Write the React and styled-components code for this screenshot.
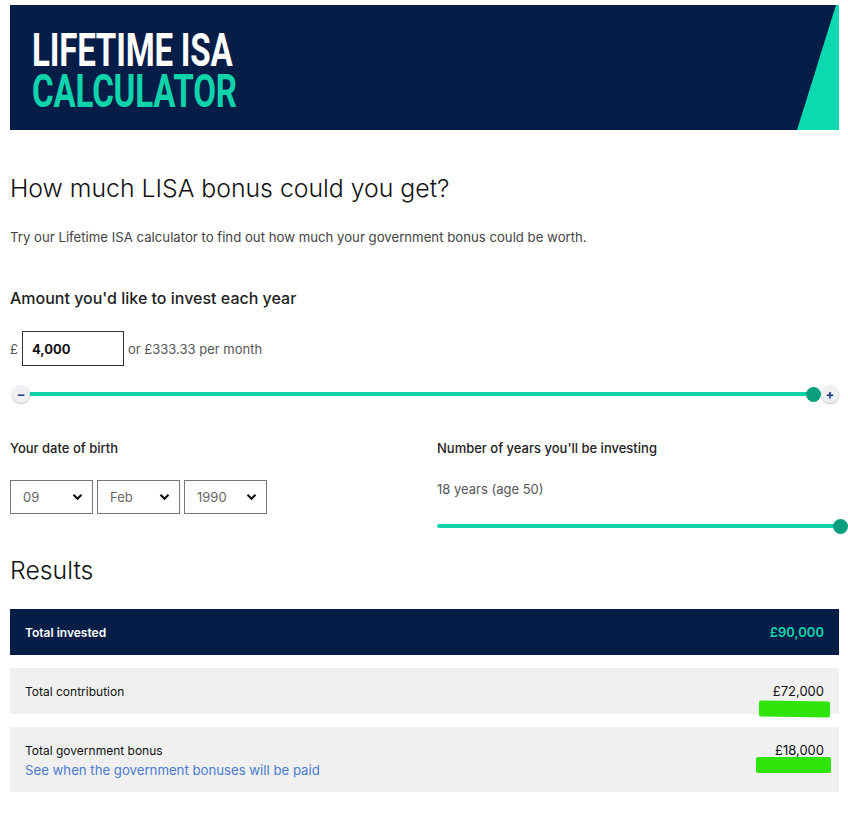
import React from "react";
import styled, { createGlobalStyle } from "styled-components";

const Global = createGlobalStyle`
  html, body { margin: 0; padding: 0; background: #fff; }
  body { font-family: Inter, "Noto Sans", sans-serif; color: #1a1a1a; }
  * { box-sizing: border-box; }
`;

const NAVY = "#061d48";
const TEAL = "#0fd4ab";

const Page = styled.div`
  padding: 5px 9px 20px 10px;
  width: 848px;
`;

const Banner = styled.header`
  position: relative;
  height: 125px;
  background: ${NAVY};
  overflow: hidden;
  padding: 25px 0 0 22px;
`;

const Wedge = styled.svg`
  position: absolute;
  right: 0;
  top: 0;
  width: 44px;
  height: 125px;
`;

const Title = styled.div`
  font-family: Roboto, "Liberation Sans", sans-serif;
  font-weight: 700;
  font-size: 46px;
  line-height: 41px;
  transform: scaleX(0.72);
  transform-origin: left center;
  white-space: nowrap;
  letter-spacing: -0.3px;
`;

const TitleLine = styled.span`
  display: block;
  color: ${(p) => p.$color};
`;

const H1 = styled.h1`
  margin: 43px 0 0 0;
  font-weight: 300;
  font-size: 24.8px;
  line-height: 30px;
  color: #111;
`;

const Lead = styled.p`
  margin: 25px 0 0 0;
  font-size: 13.2px;
  line-height: 18px;
  color: #444;
`;

const Label = styled.div`
  font-size: ${(p) => p.$size || 13}px;
  font-weight: 500;
  color: #222;
  line-height: 20px;
`;

const Section = styled.section`
  margin-top: ${(p) => p.$mt}px;
`;

const AmountRow = styled.div`
  display: flex;
  align-items: center;
  margin-top: 23px;
  font-size: 13px;
  color: #555;
`;

const Pound = styled.span`
  width: 12px;
`;

const AmountInput = styled.div`
  width: 102px;
  height: 35px;
  border: 1px solid #333;
  display: flex;
  align-items: center;
  padding-left: 9px;
  font-weight: 700;
  color: #111;
  font-size: 13px;
  margin-right: 4px;
`;

const SliderWrap = styled.div`
  position: relative;
  height: 20px;
  margin-top: ${(p) => p.$mt}px;
  margin-left: ${(p) => p.$ml || 0}px;
  margin-right: ${(p) => p.$mr || 0}px;
`;

const Track = styled.div`
  position: absolute;
  left: ${(p) => p.$left}px;
  right: ${(p) => p.$right}px;
  top: 8px;
  height: 4px;
  background: ${TEAL};
  border-radius: 2px;
`;

const Thumb = styled.div`
  position: absolute;
  width: 15px;
  height: 15px;
  border-radius: 50%;
  background: #0c9f7e;
  top: 3px;
  right: ${(p) => p.$right}px;
`;

const StepBtn = styled.div`
  position: absolute;
  top: 1px;
  ${(p) => (p.$side === "left" ? "left: 2px;" : "right: 0;")}
  width: 18px;
  height: 18px;
  border-radius: 50%;
  background: #eef0f3;
  box-shadow: 0 1px 2px rgba(0, 0, 0, 0.25);
  display: flex;
  align-items: center;
  justify-content: center;
  color: #1f3a8a;
  font-size: 13px;
  font-weight: 700;
  line-height: 1;
`;

const TwoCol = styled.div`
  display: grid;
  grid-template-columns: 427px 1fr;
  margin-top: 34px;
`;

const SelectRow = styled.div`
  display: flex;
  gap: 4px;
  margin-top: 22px;
`;

const Select = styled.div`
  width: 83px;
  height: 34px;
  border: 1px solid #777;
  display: flex;
  align-items: center;
  justify-content: space-between;
  padding: 0 9px 0 12px;
  color: #666;
  font-size: 13px;
`;

const YearsText = styled.div`
  margin-top: 21px;
  font-size: 13px;
  color: #555;
  line-height: 20px;
`;

const H2 = styled.h2`
  margin: 19px 0 0 0;
  font-weight: 300;
  font-size: 24.8px;
  line-height: 30px;
  color: #111;
`;

const Rows = styled.div`
  display: flex;
  flex-direction: column;
  gap: 13px;
  margin-top: 24px;
`;

const Row = styled.div`
  position: relative;
  display: flex;
  justify-content: space-between;
  align-items: ${(p) => (p.$tall ? "flex-start" : "center")};
  min-height: ${(p) => (p.$tall ? 65 : 46)}px;
  padding: ${(p) => (p.$tall ? "16px 15px 0 15px" : "0 15px")};
  background: ${(p) => (p.$dark ? NAVY : "#f0f0f0")};
  color: ${(p) => (p.$dark ? "#fff" : "#111")};
  font-size: 12px;
`;

const RowLabel = styled.div`
  font-weight: ${(p) => (p.$bold ? 600 : 400)};
  line-height: 15px;
  display: flex;
  flex-direction: column;
  gap: 5px;
`;

const Link = styled.a`
  color: #4a7bd0;
  font-size: 13.2px;
  text-decoration: none;
`;

const Value = styled.div`
  font-size: 13px;
  font-weight: ${(p) => (p.$bold ? 600 : 400)};
  color: ${(p) => (p.$dark ? TEAL : "#111")};
  line-height: 15px;
`;

const Marker = styled.div`
  position: absolute;
  background: #2ee40a;
  border-radius: 2px;
  right: ${(p) => p.$right}px;
  top: ${(p) => p.$top}px;
  width: ${(p) => p.$w}px;
  height: ${(p) => p.$h}px;
  transform: skewY(${(p) => p.$skew || 0}deg);
`;

const Chevron = () => (
  <svg width="11" height="8" viewBox="0 0 11 8">
    <path d="M1.5 1.8 L5.5 5.8 L9.5 1.8" stroke="#111" strokeWidth="2.2" fill="none" />
  </svg>
);

export default function App() {
  return (
    <Page>
      <Global />
      <Banner>
        <Title>
          <TitleLine $color="#ffffff">LIFETIME ISA</TitleLine>
          <TitleLine $color={TEAL}>CALCULATOR</TitleLine>
        </Title>
        <Wedge viewBox="0 0 44 125" preserveAspectRatio="none">
          <polygon points="41,0 44,0 44,125 2,125" fill="#0bd9b0" />
        </Wedge>
      </Banner>

      <H1>How much LISA bonus could you get?</H1>
      <Lead>Try our Lifetime ISA calculator to find out how much your government bonus could be worth.</Lead>

      <Section $mt={42}>
        <Label $size={16}>Amount you'd like to invest each year</Label>
        <AmountRow>
          <Pound>£</Pound>
          <AmountInput>4,000</AmountInput>
          <span>or £333.33 per month</span>
        </AmountRow>
        <SliderWrap $mt={18}>
          <Track $left={18} $right={24} />
          <Thumb $right={18} />
          <StepBtn $side="left">–</StepBtn>
          <StepBtn $side="right">+</StepBtn>
        </SliderWrap>
      </Section>

      <TwoCol>
        <div>
          <Label>Your date of birth</Label>
          <SelectRow>
            <Select>09<Chevron /></Select>
            <Select>Feb<Chevron /></Select>
            <Select>1990<Chevron /></Select>
          </SelectRow>
        </div>
        <div>
          <Label>Number of years you'll be investing</Label>
          <YearsText>18 years (age 50)</YearsText>
          <SliderWrap $mt={17} $mr={-9}>
            <Track $left={0} $right={3} />
            <Thumb $right={0} />
          </SliderWrap>
        </div>
      </TwoCol>

      <H2>Results</H2>
      <Rows>
        <Row $dark>
          <RowLabel $bold>Total invested</RowLabel>
          <Value $dark $bold>£90,000</Value>
        </Row>
        <Row>
          <RowLabel>Total contribution</RowLabel>
          <Value>£72,000</Value>
          <Marker $right={9} $top={33} $w={71} $h={16} $skew={1} />
        </Row>
        <Row $tall>
          <RowLabel>
            Total government bonus
            <Link href="#">See when the government bonuses will be paid</Link>
          </RowLabel>
          <Value>£18,000</Value>
          <Marker $right={8} $top={30} $w={75} $h={16} />
        </Row>
      </Rows>
    </Page>
  );
}
